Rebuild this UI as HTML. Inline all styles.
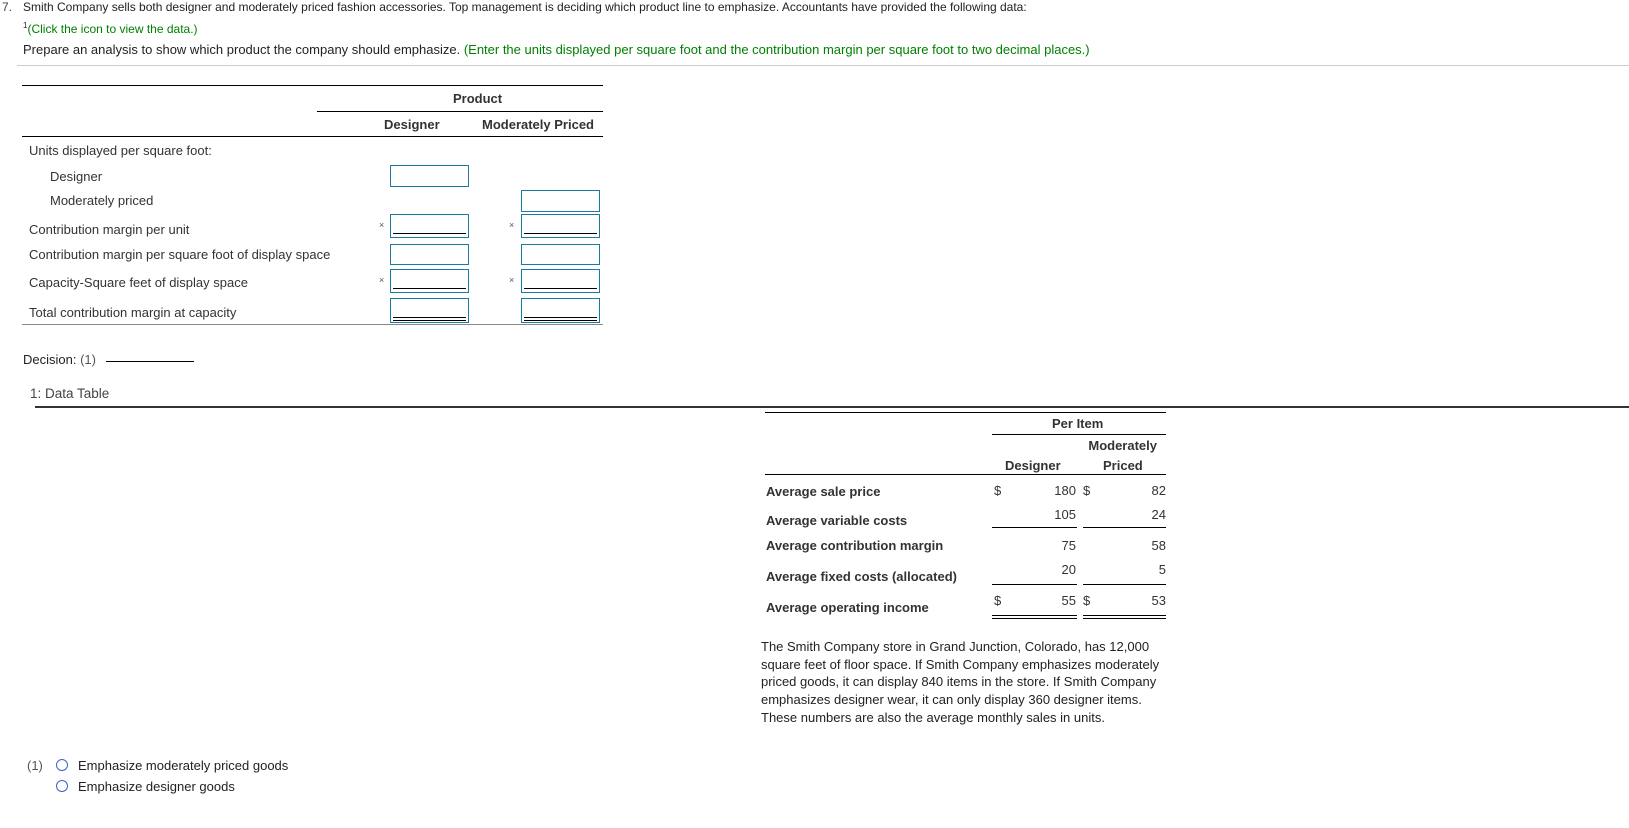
<!DOCTYPE html>
<html><head><meta charset="utf-8"><style>
body{margin:0;width:1629px;height:828px;background:#fff;position:relative;overflow:hidden;font-family:"Liberation Sans",Arial,sans-serif;font-size:13px;color:#222}
.t{position:absolute;white-space:nowrap;line-height:15px}
.l{position:absolute;height:0;border-top:1px solid #000}
.g{color:#333}
.b{font-weight:bold;color:#333}
.grn{color:#008000}
.in{position:absolute;width:79px;border:1px solid #1a7aa0;box-sizing:border-box;background:#fff}
.in .u{position:absolute;left:2px;right:2px;border-top:1px solid #000}
.x{position:absolute;font-size:9px;color:#555}
.r{text-align:right}
.rad{position:absolute;width:12px;height:12px;border:1px solid #3f5fc7;border-radius:50%;box-sizing:border-box}
</style></head><body>
<div class="t" style="left:2px;top:0px;color:#444;font-size:12px">7.</div>
<div class="t" style="left:23px;top:0px;font-size:12px">Smith Company sells both designer and moderately priced fashion accessories. Top management is deciding which product line to emphasize. Accountants have provided the following data:</div>
<div class="t grn" style="left:23px;top:18px;font-size:12px"><sup style="font-size:8px;color:#222">1</sup>(Click the icon to view the data.)</div>
<div class="t" style="left:23px;top:42px;font-size:13px">Prepare an analysis to show which product the company should emphasize. <span class="grn">(Enter the units displayed per square foot and the contribution margin per square foot to two decimal places.)</span></div>
<div class="l" style="left:17px;top:65px;width:1612px;border-color:#ccc"></div>

<div class="l" style="left:22px;top:85px;width:581px"></div>
<div class="t b" style="left:453px;top:91px">Product</div>
<div class="l" style="left:317px;top:111px;width:286px"></div>
<div class="t b" style="left:384px;top:117px">Designer</div>
<div class="t b" style="left:482px;top:117px">Moderately Priced</div>
<div class="l" style="left:22px;top:136px;width:581px"></div>
<div class="t g" style="left:29px;top:143px">Units displayed per square foot:</div>
<div class="t g" style="left:50px;top:169px">Designer</div>
<div class="t g" style="left:50px;top:193px">Moderately priced</div>
<div class="t g" style="left:29px;top:222px">Contribution margin per unit</div>
<div class="t g" style="left:29px;top:247px">Contribution margin per square foot of display space</div>
<div class="t g" style="left:29px;top:275px">Capacity-Square feet of display space</div>
<div class="t g" style="left:29px;top:305px">Total contribution margin at capacity</div>

<div class="in" style="left:390px;top:165px;height:22px"></div>
<div class="in" style="left:521px;top:190px;height:22px"></div>
<div class="in" style="left:390px;top:214px;height:24px"><div class="u" style="top:18px"></div></div>
<div class="in" style="left:521px;top:214px;height:24px"><div class="u" style="top:18px"></div></div>
<div class="in" style="left:390px;top:244px;height:21px"></div>
<div class="in" style="left:521px;top:244px;height:21px"></div>
<div class="in" style="left:390px;top:269px;height:24px"><div class="u" style="top:18px"></div></div>
<div class="in" style="left:521px;top:269px;height:24px"><div class="u" style="top:18px"></div></div>
<div class="in" style="left:390px;top:298px;height:25px"><div class="u" style="top:18px"></div><div class="u" style="top:21px"></div></div>
<div class="in" style="left:521px;top:298px;height:25px"><div class="u" style="top:18px"></div><div class="u" style="top:21px"></div></div>
<div class="x" style="left:379px;top:220px">×</div>
<div class="x" style="left:509px;top:220px">×</div>
<div class="x" style="left:379px;top:275px">×</div>
<div class="x" style="left:509px;top:275px">×</div>
<div class="l" style="left:22px;top:324px;width:581px;border-color:#888"></div>

<div class="t" style="left:23px;top:352px">Decision: <span style="color:#555">(1)</span></div>
<div class="l" style="left:106px;top:361px;width:88px"></div>
<div class="t" style="left:30px;top:386px;font-size:13.5px;color:#444">1: Data Table</div>
<div class="l" style="left:35px;top:406px;width:1594px;border-top:2px solid #333"></div>

<div class="l" style="left:765px;top:412px;width:401px"></div>
<div class="t b" style="left:1052px;top:416px">Per Item</div>
<div class="l" style="left:992px;top:434px;width:174px"></div>
<div class="t b r" style="left:1070px;top:438px;width:87px">Moderately</div>
<div class="t b" style="left:1005px;top:458px">Designer</div>
<div class="t b" style="left:1103px;top:458px">Priced</div>
<div class="l" style="left:765px;top:474px;width:401px"></div>

<div class="t b" style="left:766px;top:484px">Average sale price</div>
<div class="t g" style="left:994px;top:483px">$</div>
<div class="t g r" style="left:1028px;top:483px;width:48px">180</div>
<div class="t g" style="left:1083px;top:483px">$</div>
<div class="t g r" style="left:1122px;top:483px;width:44px">82</div>

<div class="t b" style="left:766px;top:513px">Average variable costs</div>
<div class="t g r" style="left:1028px;top:507px;width:48px">105</div>
<div class="t g r" style="left:1122px;top:507px;width:44px">24</div>
<div class="l" style="left:992px;top:527px;width:85px"></div>
<div class="l" style="left:1083px;top:527px;width:83px"></div>

<div class="t b" style="left:766px;top:538px">Average contribution margin</div>
<div class="t g r" style="left:1028px;top:538px;width:48px">75</div>
<div class="t g r" style="left:1122px;top:538px;width:44px">58</div>

<div class="t b" style="left:766px;top:569px">Average fixed costs (allocated)</div>
<div class="t g r" style="left:1028px;top:562px;width:48px">20</div>
<div class="t g r" style="left:1122px;top:562px;width:44px">5</div>
<div class="l" style="left:992px;top:584px;width:85px"></div>
<div class="l" style="left:1083px;top:584px;width:83px"></div>

<div class="t b" style="left:766px;top:600px">Average operating income</div>
<div class="t g" style="left:994px;top:593px">$</div>
<div class="t g r" style="left:1028px;top:593px;width:48px">55</div>
<div class="t g" style="left:1083px;top:593px">$</div>
<div class="t g r" style="left:1122px;top:593px;width:44px">53</div>
<div class="l" style="left:992px;top:615px;width:85px"></div>
<div class="l" style="left:992px;top:618px;width:85px"></div>
<div class="l" style="left:1083px;top:615px;width:83px"></div>
<div class="l" style="left:1083px;top:618px;width:83px"></div>

<div class="t" style="left:761px;top:638px;line-height:17.7px;white-space:normal;width:440px">The Smith Company store in Grand Junction, Colorado, has 12,000<br>square feet of floor space. If Smith Company emphasizes moderately<br>priced goods, it can display 840 items in the store. If Smith Company<br>emphasizes designer wear, it can only display 360 designer items.<br>These numbers are also the average monthly sales in units.</div>

<div class="t" style="left:27px;top:758px;color:#555">(1)</div>
<div class="rad" style="left:56px;top:759px"></div>
<div class="t" style="left:78px;top:758px">Emphasize moderately priced goods</div>
<div class="rad" style="left:56px;top:780px"></div>
<div class="t" style="left:78px;top:779px">Emphasize designer goods</div>
</body></html>
